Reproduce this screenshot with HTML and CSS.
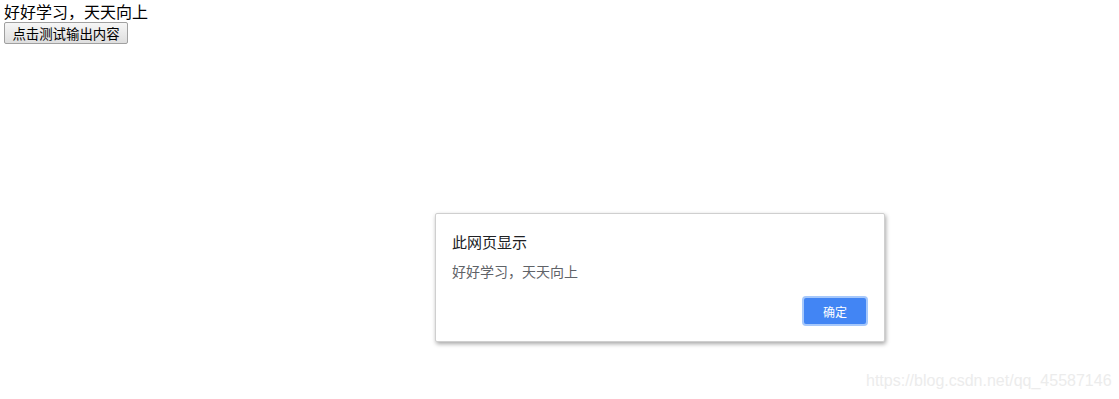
FILE: index.html
```html
<!DOCTYPE html>
<html lang="zh-CN">
<head>
<meta charset="utf-8">
<title>alert</title>
<link rel="stylesheet" href="styles.css">
</head>
<body>
<div class="page">
  <div class="line">好好学习，天天向上</div>
  <button class="test-btn">点击测试输出内容</button>
</div>
<div class="dialog">
  <div class="dialog-title">此网页显示</div>
  <div class="dialog-msg">好好学习，天天向上</div>
  <div class="dialog-actions">
    <button class="ok-btn">确定</button>
  </div>
</div>
<div class="watermark">https://blog.csdn.net/qq_45587146</div>
</body>
</html>
```

FILE: styles.css
```css
html, body {
  margin: 0;
  padding: 0;
  background: #fff;
}
body {
  width: 1119px;
  height: 399px;
  position: relative;
  overflow: hidden;
  font-family: "Noto Sans CJK SC", "Liberation Sans", sans-serif;
}
.page {
  padding: 1px 4px;
}
.line {
  font-size: 16px;
  line-height: 21px;
  color: #000;
}
.test-btn {
  font-family: "Noto Sans CJK SC", "Liberation Sans", sans-serif;
  font-size: 13.4px;
  line-height: 16px;
  height: 22px;
  width: 124px;
  padding: 0 4px;
  color: #000;
  background: linear-gradient(#f6f6f6, #dedede);
  border: 1px solid #a0a0a0;
  border-radius: 2px;
  display: block;
}
.dialog {
  position: absolute;
  left: 435px;
  top: 213px;
  width: 450px;
  height: 129px;
  box-sizing: border-box;
  border: 1px solid #cfcfcf;
  border-radius: 2px;
  background: #fff;
  box-shadow: 1px 2px 4px rgba(0,0,0,0.35);
  padding: 17px 16px 15px 16px;
  display: flex;
  flex-direction: column;
}
.dialog-title {
  font-size: 15px;
  line-height: 21px;
  color: #202124;
}
.dialog-msg {
  margin-top: 10px;
  font-size: 14px;
  line-height: 19px;
  color: #5f6368;
}
.dialog-actions {
  display: flex;
  justify-content: flex-end;
  margin-top: auto;
}
.ok-btn {
  width: 66px;
  height: 30px;
  box-sizing: border-box;
  background: #4285f4;
  border: 2px solid #a6c8fb;
  border-radius: 4px;
  color: #fff;
  font-family: "Noto Sans CJK SC", "Liberation Sans", sans-serif;
  font-size: 12px;
  padding: 0;
}
.watermark {
  position: absolute;
  left: 866px;
  top: 371px;
  font-family: "Liberation Sans", sans-serif;
  font-size: 16px;
  line-height: 20px;
  color: #ececec;
}
```
